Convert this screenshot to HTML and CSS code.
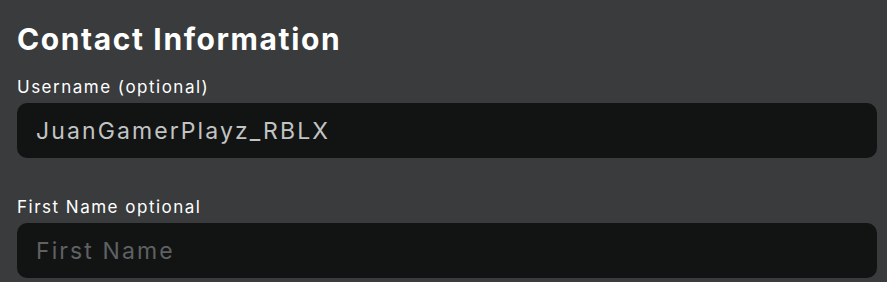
FILE: index.html
```html
<!DOCTYPE html>
<html lang="en">
<head>
    <meta charset="UTF-8">
    <meta name="viewport" content="width=device-width, initial-scale=1.0">
    <title>Contact Information</title>
    <link rel="stylesheet" href="styles.css">
</head>
<body>

    <div class="section">
        <h1>Contact Information</h1>

        <!-- username -->
        <div class="field">
            <label for="username">Username (optional)</label>
            <input type="text" id="username" value="JuanGamerPlayz_RBLX">
        </div>

        <!-- first name -->
        <div class="field">
            <label for="firstName">First Name optional</label>
            <input type="text" id="firstName" placeholder="First Name">
        </div>
    </div>

</body>
</html>
```

FILE: styles.css
```css
/* page */
body {
    font-family: 'Inter', 'Noto Sans', sans-serif;
    background-color: #393b3d;
    margin: 0;
    color: #ffffff;
}

.section {
    padding: 19px 10px 0 17px;
}

h1 {
    margin: 0 0 18px;
    font-size: 30px;
    font-weight: 700;
    line-height: 40px;
    letter-spacing: 1.6px;
}

.field {
    display: flex;
    flex-direction: column;
    margin-bottom: 39px;
}

.field:last-child {
    margin-bottom: 0;
}

.field label {
    font-size: 17px;
    font-weight: 400;
    line-height: 20px;
    letter-spacing: 1.5px;
    margin-bottom: 6px;
}

.field input {
    height: 55px;
    box-sizing: border-box;
    padding: 0 19px;
    background-color: #121414;
    border: none;
    border-radius: 10px;
    color: #c2c3c3;
    font-family: inherit;
    font-size: 23px;
    letter-spacing: 2.1px;
    outline: none;
}

.field input::placeholder {
    color: #5f6163;
}
```
